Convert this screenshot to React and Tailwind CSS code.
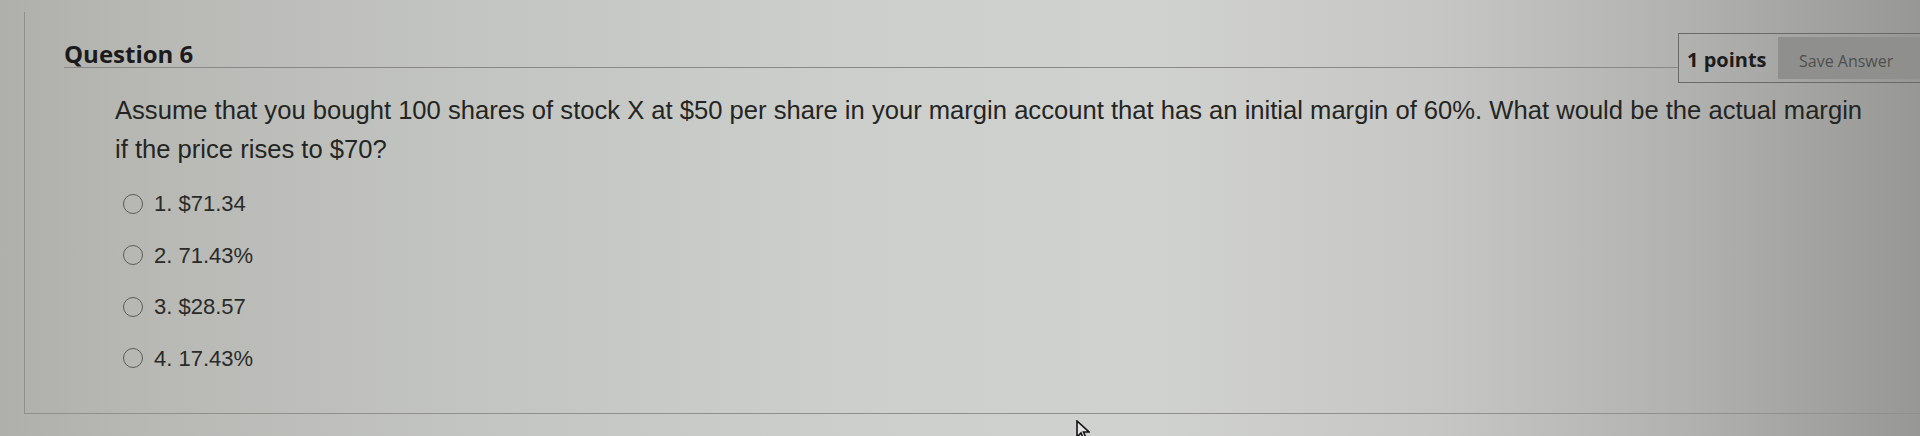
const OPTIONS = [
  { n: 1, label: '$71.34' },
  { n: 2, label: '71.43%' },
  { n: 3, label: '$28.57' },
  { n: 4, label: '17.43%' },
];

function Cursor() {
  return (
    <svg className="absolute left-[1076px] top-[420px]" width="14" height="22" viewBox="0 0 14 22">
      <path d="M1 1 L1 17 L5 13 L8 20 L10.5 19 L7.5 12 L13 12 Z" fill="#e2e3e1" stroke="#111" strokeWidth="1.6" strokeLinejoin="miter" />
    </svg>
  );
}

export default function App() {
  return (
    <div className="relative w-[1920px] h-[436px] overflow-hidden bg-[linear-gradient(90deg,#afb0ac_0%,#b8b9b5_8%,#c3c5c2_25%,#cdcfcd_45%,#d0d2d0_60%,#c6c7c5_75%,#b1b2b0_88%,#979896_100%)]">
      {/* question container */}
      <div className="ml-[24px] mt-[12px] h-[402px] border-l border-b border-[#90918d]">
        {/* header */}
        <div className="flex items-start pt-[21px]">
          <div className="flex-1 ml-[39px] h-[35px] flex items-end border-b border-[#898a87]">
            <h2 className="font-['Open_Sans',sans-serif] font-bold text-[24px] leading-[27px] text-[#1b1b1b]">
              Question 6
            </h2>
          </div>
          <div className="w-[252px] h-[50px] mr-[-10px] shrink-0 border border-[#6a6b68] py-[3px] flex items-stretch">
            <div className="w-[99px] pl-[8px] pt-[4px] flex items-center font-['Open_Sans',sans-serif] font-bold text-[20px] text-[#1c1c1c]">
              1 points
            </div>
            <button className="flex-1 pl-[21px] pt-[6px] text-left bg-[#8f908d] font-['Open_Sans',sans-serif] text-[16px] text-[#4e4f4d]">
              Save Answer
            </button>
          </div>
        </div>

        {/* question text */}
        <p className="ml-[90px] mt-[8px] w-[1762px] font-['Liberation_Sans',Arial,sans-serif] text-[25.6px] leading-[39px] text-[#242523]">
          Assume that you bought 100 shares of stock X at $50 per share in your margin account that has an initial margin of 60%. What would be the actual margin if the price rises to $70?
        </p>

        {/* answers */}
        <div className="ml-[98px] mt-[9px] flex flex-col">
          {OPTIONS.map(o => (
            <label key={o.n} className="h-[51.5px] flex items-center gap-[11px] font-['Liberation_Sans',Arial,sans-serif] text-[22px] text-[#2a2b29]">
              <span className="w-[20px] h-[20px] rounded-full border-[1.5px] border-[#5b5c5a]" />
              <span>{o.n}. {o.label}</span>
            </label>
          ))}
        </div>
      </div>
      <Cursor />
    </div>
  );
}
